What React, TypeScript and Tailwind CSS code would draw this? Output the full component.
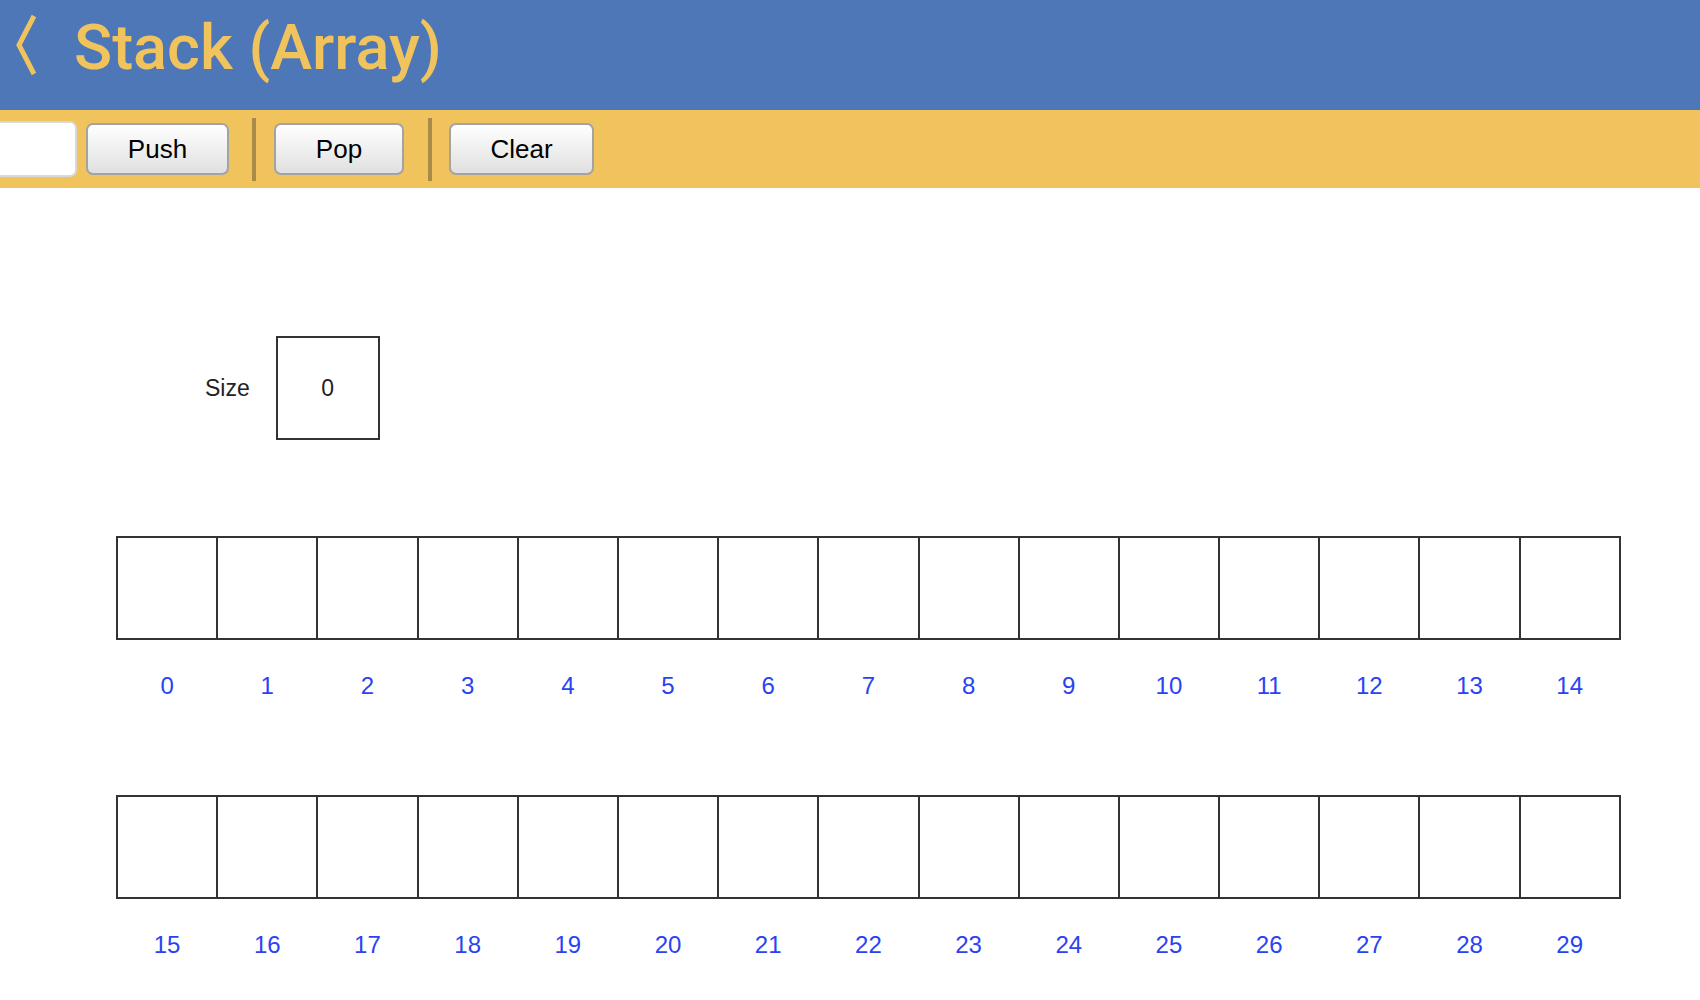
import React from "react";

const CELLS = 15;

const Row = ({ start }: { start: number }) => {
  const idx = Array.from({ length: CELLS }, (_, i) => start + i);
  return (
    <div>
      <div className="flex">
        {idx.map((i) => (
          <div
            key={i}
            className="-ml-[2px] h-[104px] w-[102.2px] border-2 border-[#333] bg-white first:ml-0"
          ></div>
        ))}
      </div>
      <div className="ml-[1px] mt-[32px] flex">
        {idx.map((i) => (
          <div
            key={i}
            className="w-[100.2px] text-center text-[24px] leading-[28px] text-[#2a43f2]"
          >
            {i}
          </div>
        ))}
      </div>
    </div>
  );
};

const Button = ({ label, width }: { label: string; width: string }) => (
  <button
    className={`${width} h-[52px] rounded-[7px] border-2 border-[#a3a3a3] bg-gradient-to-b from-white to-[#e0e0e0] text-[26px] text-black`}
  >
    {label}
  </button>
);

const Divider = () => <div className="h-[63px] w-[4px] bg-[#a98a4b]"></div>;

export default function App() {
  return (
    <div
      className="min-h-screen bg-white"
      style={{ fontFamily: '"Liberation Sans", Arial, sans-serif' }}
    >
      {/* Header */}
      <div className="flex h-[110px] items-start bg-[#4d77b6]">
        <svg width="40" height="110" viewBox="0 0 40 110">
          <polyline
            points="34,16 19,45 34,74"
            fill="none"
            stroke="#f0c35d"
            strokeWidth="5"
          />
        </svg>
        <h1
          className="ml-[34px] mt-[8px] text-[63px] font-medium leading-[80px] text-[#f0c35d]"
          style={{ fontFamily: "Roboto, sans-serif" }}
        >
          Stack (Array)
        </h1>
      </div>

      {/* Toolbar */}
      <div className="flex h-[78px] items-center bg-[#f0c35d]">
        <input
          className="-ml-[10px] h-[56px] w-[87px] rounded-[7px] border-2 border-[#d9d9d9] bg-white outline-none"
          type="text"
        />
        <div className="ml-[9px]">
          <Button label="Push" width="w-[143px]" />
        </div>
        <div className="ml-[23px]">
          <Divider />
        </div>
        <div className="ml-[18px]">
          <Button label="Pop" width="w-[130px]" />
        </div>
        <div className="ml-[24px]">
          <Divider />
        </div>
        <div className="ml-[17px]">
          <Button label="Clear" width="w-[145px]" />
        </div>
      </div>

      {/* Size */}
      <div className="ml-[205px] mt-[148px] flex items-center">
        <span className="text-[23px] text-[#222]">Size</span>
        <div className="ml-[26px] flex h-[104px] w-[104px] items-center justify-center border-2 border-[#333] text-[23px] text-[#222]">
          0
        </div>
      </div>

      {/* Array */}
      <div className="ml-[116px] mt-[96px]">
        <Row start={0} />
        <div className="mt-[95px]">
          <Row start={15} />
        </div>
      </div>
    </div>
  );
}
